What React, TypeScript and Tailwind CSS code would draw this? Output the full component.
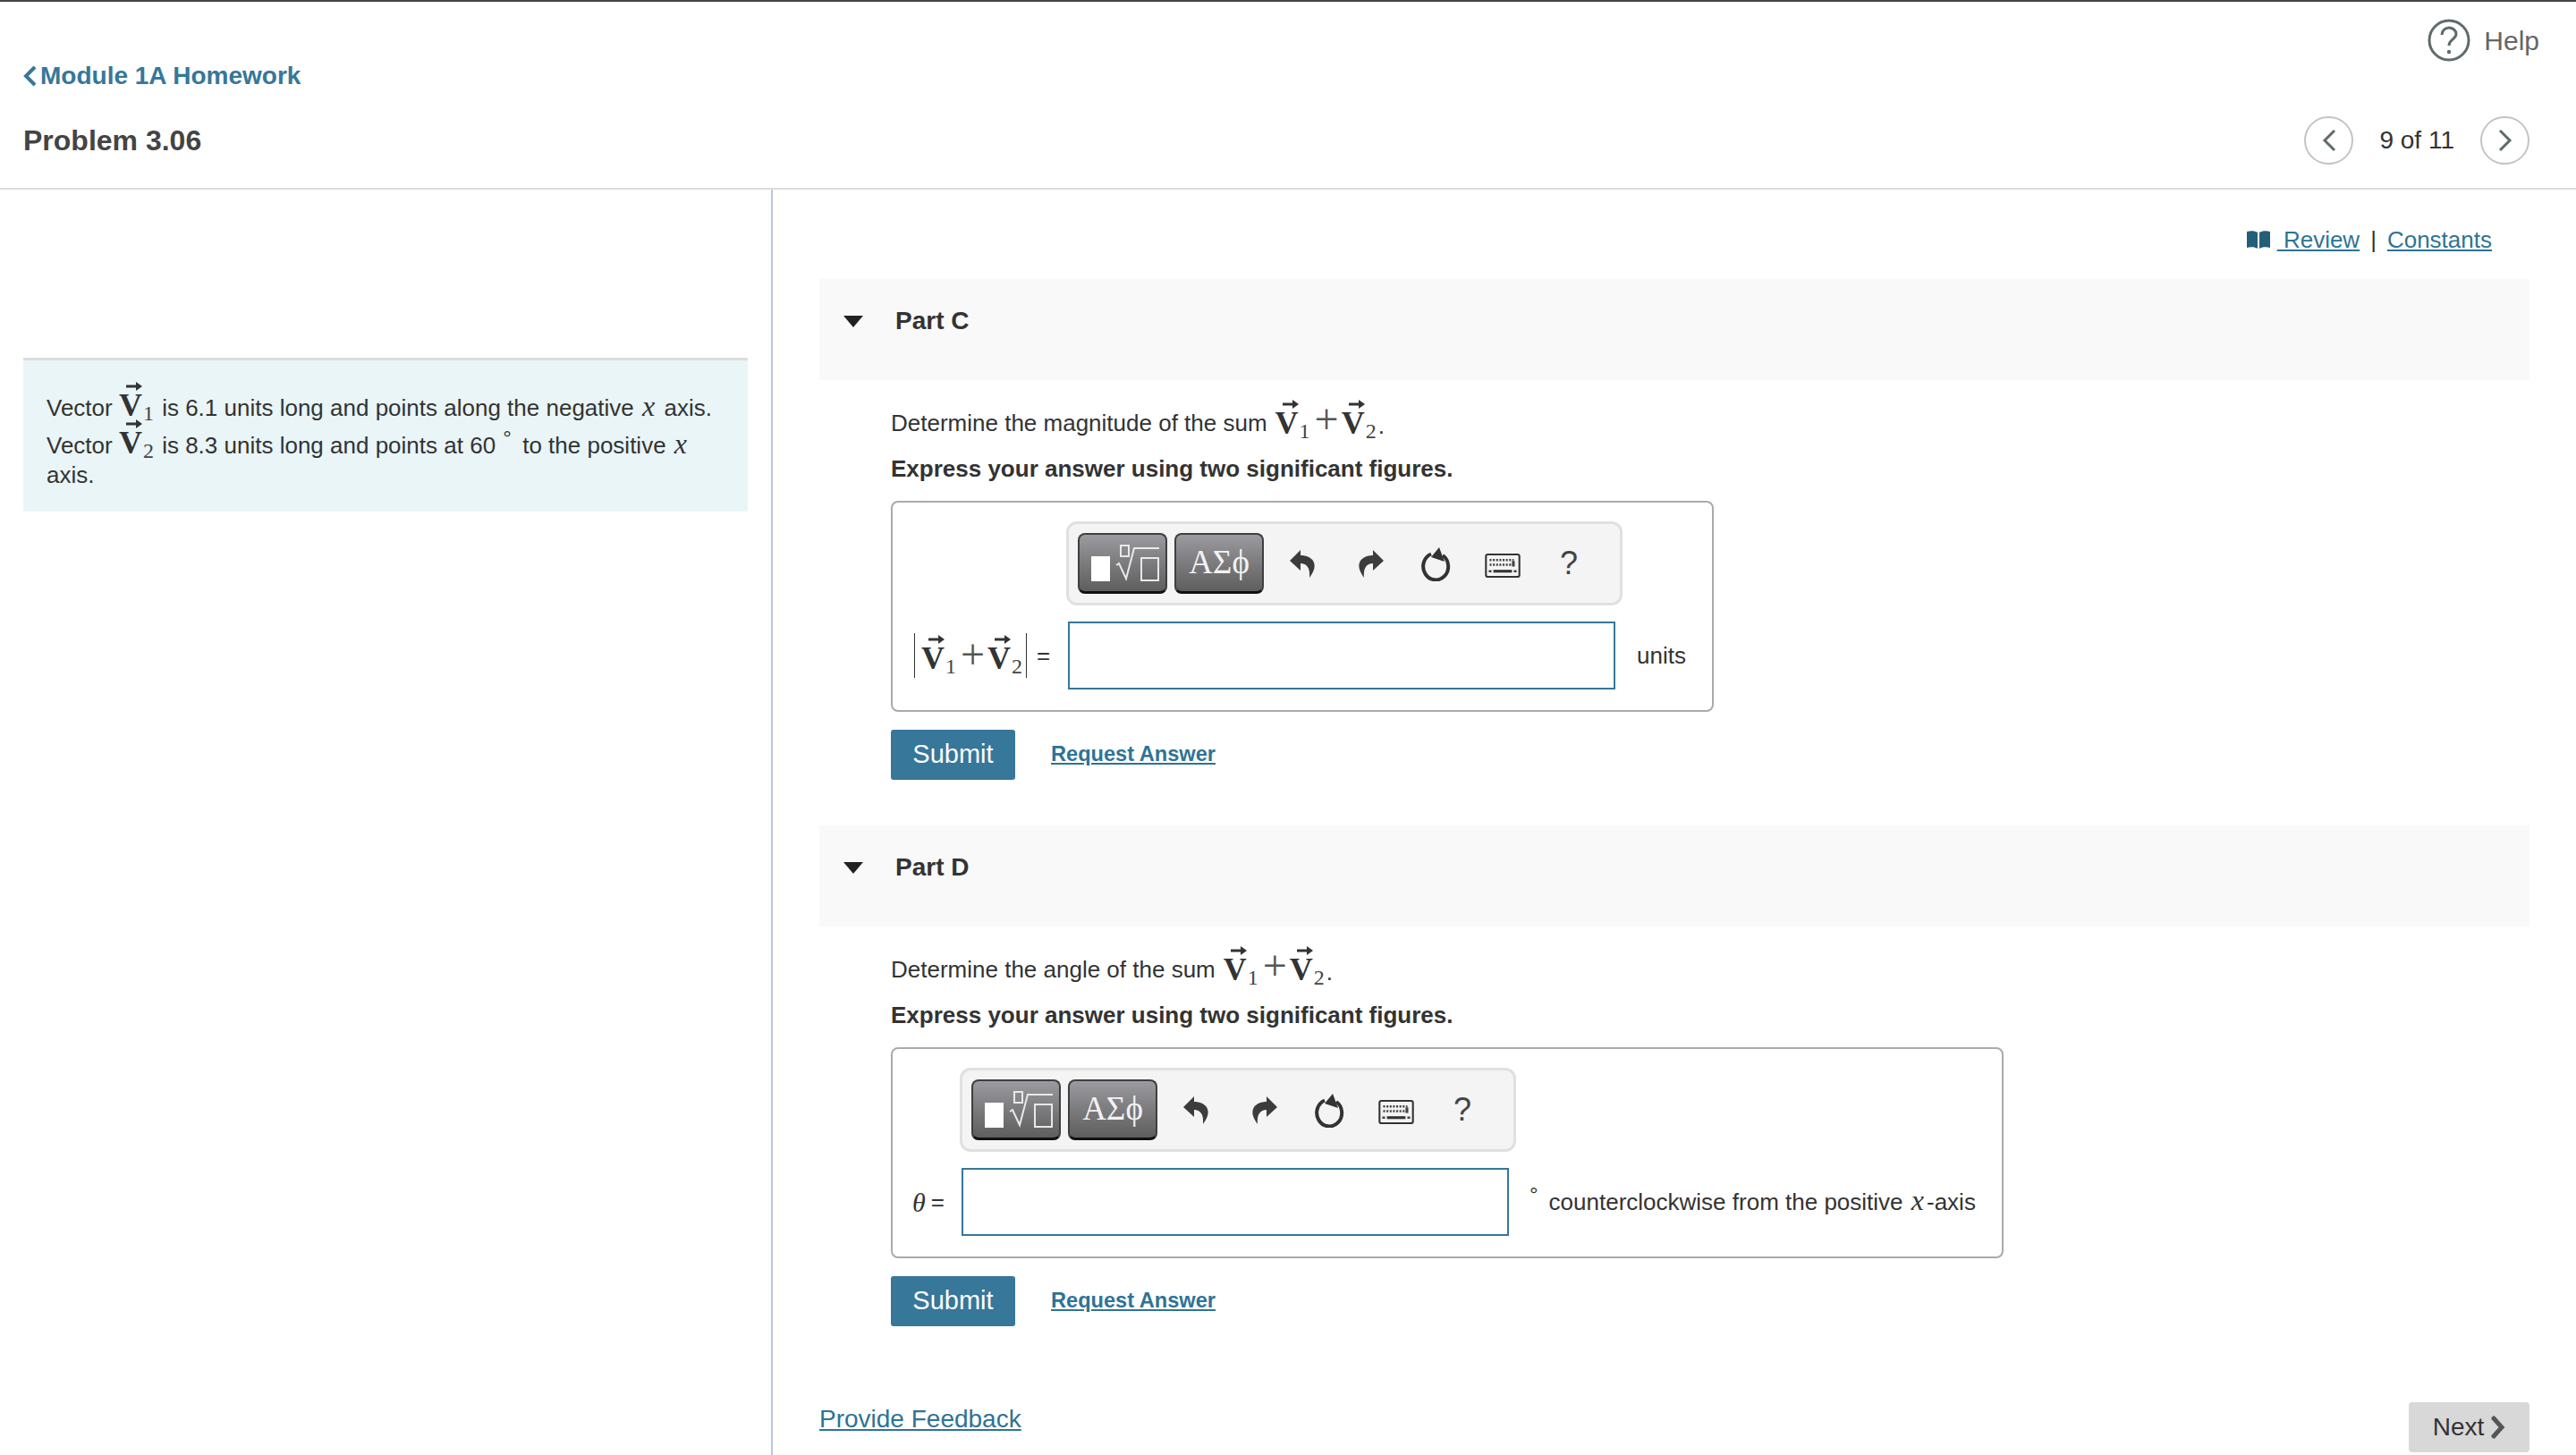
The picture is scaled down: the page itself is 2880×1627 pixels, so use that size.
import React from 'react';

const Vec = ({ n }: { n: string }) => (
  <span className="inline-block whitespace-nowrap font-['Liberation_Serif',serif]">
    <span className="relative inline-block text-[36px] font-bold leading-none text-[#333]">
      V
      <svg className="absolute left-[7px] top-[-9px]" width="20" height="12" viewBox="0 0 20 12">
        <path d="M1 6h14" stroke="#333" strokeWidth="3" />
        <path d="M12 1l7 5-7 5z" fill="#333" />
      </svg>
    </span>
    <span className="relative top-[5px] ml-[1px] mr-[2px] text-[24px] text-[#444]">{n}</span>
  </span>
);

const VecSum = () => (
  <span className="relative top-[3px] inline-flex items-baseline">
    <Vec n="1" />
    <span className="mx-[3px] font-['Liberation_Serif',serif] text-[48px] font-light leading-none text-[#555]">+</span>
    <Vec n="2" />
  </span>
);

const MathX = () => <span className="ml-[2px] mr-[3px] font-['Liberation_Serif',serif] text-[32px] italic leading-none">x</span>;

const UndoIcon = ({ flip }: { flip?: boolean }) => (
  <svg width="30" height="34" viewBox="0 0 30 34" className={flip ? '-scale-x-100' : ''}>
    <path d="M13 2L1 14l12 11v-8c7 0 11 5 10 16 6-8 7-14 4-19-3-4-8-6-14-6z" fill="#3c3c3c" />
  </svg>
);

const ReloadIcon = () => (
  <svg width="34" height="40" viewBox="0 0 34 40">
    <path d="M24 11a14 15 0 1 1-13-1.500" fill="none" stroke="#333" strokeWidth="4" />
    <path d="M20 2l-9 11 15 5z" fill="#333" />
  </svg>
);

const KeyboardIcon = () => (
  <svg className="mt-[5px]" width="40" height="27" viewBox="0 0 38 26">
    <rect x="1" y="1" width="36" height="24" rx="2" fill="#f4f4f4" stroke="#333" strokeWidth="2" />
    <path d="M5 7h26" stroke="#444" strokeWidth="2.500" strokeDasharray="2 1.500" />
    <path d="M5 12h24" stroke="#444" strokeWidth="2.500" strokeDasharray="2 1.500" />
    <path d="M29 8h3v6h-3z" fill="#444" />
    <path d="M9 19h20" stroke="#333" strokeWidth="3" />
    <path d="M4 19h3M31 19h3" stroke="#444" strokeWidth="2.500" />
  </svg>
);

const TemplateGlyph = () => (
  <svg className="ml-[5px]" width="76" height="42" viewBox="0 0 76 42">
    <rect x="0" y="13" width="21" height="28" fill="#fff" />
    <rect x="33" y="1" width="9" height="12" fill="none" stroke="#e8e8e8" strokeWidth="2" />
    <path d="M28 23l3-2 8 17 9-34h28" fill="none" stroke="#e8e8e8" strokeWidth="2" />
    <rect x="56" y="15" width="19" height="25" fill="none" stroke="#e8e8e8" strokeWidth="2" />
  </svg>
);

const ToolBtn = ({ children }: { children: React.ReactNode }) => (
  <div className="flex h-[68px] w-[100px] items-center justify-center rounded-[8px] border-2 border-b-[3px] border-[#3f3f3f] border-b-[#111] bg-gradient-to-b from-[#9b9ba0] to-[#5e5e5e]">
    {children}
  </div>
);

const Toolbar = () => (
  <div className="flex h-[94px] w-[622px] items-center rounded-[12px] border-[3px] border-[#e0e0e0] bg-[#f4f4f4] pl-[10px]">
    <ToolBtn>
      <TemplateGlyph />
    </ToolBtn>
    <div className="ml-[8px]">
      <ToolBtn>
        <span className="mb-[2px] font-['Liberation_Serif',serif] text-[37px] leading-none text-[#f2f2f2]">ΑΣϕ</span>
      </ToolBtn>
    </div>
    <div className="ml-[25px] flex w-[35px] justify-center"><UndoIcon /></div>
    <div className="ml-[42px] flex w-[35px] justify-center"><UndoIcon flip /></div>
    <div className="ml-[38px] flex w-[35px] justify-center"><ReloadIcon /></div>
    <div className="ml-[37px] flex w-[40px] justify-center"><KeyboardIcon /></div>
    <span className="ml-[44px] text-[36px] leading-none text-[#444]">?</span>
  </div>
);

const PartHeader = ({ label }: { label: string }) => (
  <div className="flex h-[113px] items-start bg-[#f9f9f9] pl-[27px] pt-[33px]">
    <svg className="mt-[8px]" width="22" height="13" viewBox="0 0 22 13">
      <path d="M0 0h22L11 13z" fill="#222" />
    </svg>
    <h3 className="ml-[36px] text-[28px] font-bold leading-[28px] text-[#333]">{label}</h3>
  </div>
);

const Actions = () => (
  <div className="mt-[20px] flex items-center">
    <button className="flex h-[56px] w-[139px] items-center justify-center rounded-[3px] bg-[#36779a] text-[29px] text-white">
      Submit
    </button>
    <a className="ml-[40px] text-[23.600px] font-bold text-[#2f7396] underline">Request Answer</a>
  </div>
);

const PartC = () => (
  <section>
    <PartHeader label="Part C" />
    <div className="pl-[80px]">
      <p className="mt-[17px] flex h-[50px] items-baseline text-[26px] leading-[50px] text-[#333]">
        <span className="mr-[9px]">Determine the magnitude of the sum</span>
        <VecSum />
        <span className="relative top-[3px]">.</span>
      </p>
      <p className="mt-[16px] text-[26px] font-bold leading-[32px] text-[#333]">
        Express your answer using two significant figures.
      </p>
      <div className="mt-[20px] h-[236px] w-[920px] rounded-[8px] border-2 border-[#aaa] pl-[194px] pt-[21px]">
        <Toolbar />
        <div className="-ml-[170px] mt-[18px] flex items-center">
          <span className="flex h-[50px] w-[172px] items-center">
            <span className="flex h-[50px] items-center border-x border-[#333] pb-[7px] pl-[7px] pr-[2px]">
              <VecSum />
            </span>
            <span className="ml-[11px] text-[26px] text-[#333]">=</span>
          </span>
          <div className="h-[76px] w-[612px] border-2 border-[#36779a] bg-white" />
          <span className="ml-[24px] text-[26px] text-[#333]">units</span>
        </div>
      </div>
      <Actions />
    </div>
  </section>
);

const PartD = () => (
  <section className="mt-[51px]">
    <PartHeader label="Part D" />
    <div className="pl-[80px]">
      <p className="mt-[17px] flex h-[50px] items-baseline text-[26px] leading-[50px] text-[#333]">
        <span className="mr-[9px]">Determine the angle of the sum</span>
        <VecSum />
        <span className="relative top-[3px]">.</span>
      </p>
      <p className="mt-[16px] text-[26px] font-bold leading-[32px] text-[#333]">
        Express your answer using two significant figures.
      </p>
      <div className="mt-[20px] h-[236px] w-[1244px] rounded-[8px] border-2 border-[#aaa] pl-[75px] pt-[21px]">
        <Toolbar />
        <div className="-ml-[53px] mt-[18px] flex items-center">
          <span className="flex h-[50px] w-[55px] items-center text-[26px] text-[#333]">
            <span className="font-['Liberation_Serif',serif] text-[30px] italic">θ</span>
            <span className="ml-[6px]">=</span>
          </span>
          <div className="h-[76px] w-[612px] border-2 border-[#36779a] bg-white" />
          <span className="ml-[23px] text-[26px] text-[#333]">
            <span className="relative top-[-9px] mr-[12px] text-[24px]">°</span>
            counterclockwise from the positive <MathX />-axis
          </span>
        </div>
      </div>
      <Actions />
    </div>
  </section>
);

export default function App() {
  return (
    <div className="flex h-[1627px] flex-col overflow-hidden bg-white font-['Liberation_Sans',sans-serif]">
      <header className="flex h-[212px] shrink-0 justify-between border-t-2 border-b-[2px] border-t-[#444] border-b-[#ddd] pl-[26px] pr-[52px]">
        <div>
          <a className="mt-[66px] flex items-center text-[28px] font-bold leading-[34px] text-[#36779a]">
            <svg className="mr-[3px]" width="16" height="24" viewBox="0 0 16 24">
              <path d="M13 2L3 12l10 10" fill="none" stroke="#36779a" strokeWidth="4" />
            </svg>
            Module 1A Homework
          </a>
          <h1 className="mt-[35px] text-[32px] font-bold leading-[40px] text-[#444]">Problem 3.06</h1>
        </div>
        <div className="flex flex-col items-end">
          <div className="-mr-[11px] mt-[19px] flex items-center">
            <svg width="48" height="48" viewBox="0 0 48 48">
              <circle cx="24" cy="24" r="22" fill="none" stroke="#5f6b6b" strokeWidth="3" />
              <path d="M16 18c0-5 4-8 8-8s8 3 8 7c0 6-8 6-8 13" fill="none" stroke="#5f6b6b" strokeWidth="3" />
              <circle cx="24" cy="37" r="2.200" fill="#5f6b6b" />
            </svg>
            <span className="ml-[15px] text-[30px] text-[#666]">Help</span>
          </div>
          <div className="mt-[61px] flex items-center">
            <button className="flex h-[54px] w-[55px] items-center justify-center rounded-full border-2 border-[#c4c4c4]">
              <svg width="16" height="26" viewBox="0 0 16 26">
                <path d="M14 2L3 13l11 11" fill="none" stroke="#5f6b6b" strokeWidth="3" />
              </svg>
            </button>
            <span className="mx-[29px] text-[28px] text-[#333]">9 of 11</span>
            <button className="flex h-[54px] w-[55px] items-center justify-center rounded-full border-2 border-[#c4c4c4]">
              <svg width="16" height="26" viewBox="0 0 16 26">
                <path d="M2 2l11 11L2 24" fill="none" stroke="#5f6b6b" strokeWidth="3" />
              </svg>
            </button>
          </div>
        </div>
      </header>

      <div className="flex min-h-0 flex-1">
        <aside className="w-[864px] shrink-0 border-r-2 border-[#b9c8d9] pl-[26px] pr-[26px] pt-[188px]">
          <div className="h-[172px] border-t-[3px] border-[#ddd] bg-[#e9f5f7] pl-[26px] pt-[32px] text-[26px] text-[#333]">
            <p className="h-[42px] leading-[42px]">
              Vector <Vec n="1" /> is 6.1 units long and points along the negative <MathX /> axis.
            </p>
            <p className="h-[42px] leading-[42px]">
              Vector <Vec n="2" /> is 8.3 units long and points at 60{' '}
              <span className="relative top-[-9px] ml-[1px] mr-[5px] text-[24px] leading-none">°</span> to the positive <MathX />
            </p>
            <p className="leading-[24px]">axis.</p>
          </div>
        </aside>

        <main className="relative min-w-0 flex-1 pl-[52px] pr-[52px] pt-[42px]">
          <div className="flex h-[28px] items-center justify-end pr-[42px] text-[26px] text-[#2f7396]">
            <svg className="mr-[8px]" width="26" height="20" viewBox="0 0 26 20">
              <path d="M0 1c4-1 9-1 12 1v18c-3-2-8-2-12-1zM26 1c-4-1-9-1-12 1v18c3-2 8-2 12-1z" fill="#245f78" />
            </svg>
            <a className="underline">&nbsp;Review</a>
            <span className="mx-[12px] text-[#333]">|</span>
            <a className="underline">Constants</a>
          </div>
          <div className="mt-[30px]">
            <PartC />
            <PartD />
          </div>
          <div className="absolute bottom-[3px] left-[52px] right-[52px] flex items-end justify-between">
            <a className="mb-[16px] text-[28px] text-[#2f7396] underline">Provide Feedback</a>
            <button className="flex h-[56px] w-[135px] items-center justify-center rounded-[4px] bg-[#d8d8d8] text-[28px] text-[#333]">
              Next
              <svg className="ml-[8px]" width="16" height="26" viewBox="0 0 16 26">
                <path d="M3 3l9 10-9 10" fill="none" stroke="#555" strokeWidth="5" strokeLinecap="round" />
              </svg>
            </button>
          </div>
        </main>
      </div>
    </div>
  );
}
